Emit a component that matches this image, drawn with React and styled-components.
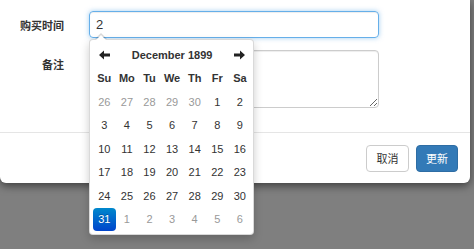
import React from "react";
import styled, { createGlobalStyle } from "styled-components";

const Global = createGlobalStyle`
  html, body { margin: 0; padding: 0; }
  body {
    background: #7f7f7f;
    font-family: "Liberation Sans", "Noto Sans CJK SC", Arial, sans-serif;
    color: #333;
    width: 474px;
    height: 249px;
    overflow: hidden;
  }
`;

const Modal = styled.div`
  width: 470px;
  background: #fff;
  border-radius: 0 0 6px 6px;
  box-shadow: 0 3px 9px rgba(0, 0, 0, 0.5);
  position: relative;
`;

const Body = styled.div`
  padding: 11px 0 24px 0;
  display: flex;
  flex-direction: column;
  gap: 12px;
`;

const Row = styled.div`
  display: grid;
  grid-template-columns: 64px 290px;
  column-gap: 25px;
  align-items: ${(p) => (p.$top ? "start" : "center")};
`;

const Label = styled.label`
  text-align: right;
  font-size: 11px;
  font-weight: 600;
  color: #333;
  font-family: "Noto Sans CJK SC", sans-serif;
  padding-top: ${(p) => (p.$top ? "6px" : "0")};
  line-height: 16px;
`;

const Field = styled.div`
  position: relative;
`;

const Input = styled.div`
  box-sizing: border-box;
  height: 27px;
  border: 1px solid #66afe9;
  border-radius: 4px;
  box-shadow: inset 0 1px 1px rgba(0, 0, 0, 0.075), 0 0 5px rgba(102, 175, 233, 0.6);
  padding: 0 6px;
  display: flex;
  align-items: center;
  font-size: 13px;
  color: #333;
`;

const Textarea = styled.textarea`
  box-sizing: border-box;
  display: block;
  width: 290px;
  height: 58px;
  border: 1px solid #ccc;
  border-radius: 4px;
  box-shadow: inset 0 1px 1px rgba(0, 0, 0, 0.075);
  margin: 0;
  padding: 4px 6px;
  font: inherit;
`;

const Footer = styled.div`
  border-top: 1px solid #e5e5e5;
  height: 50px;
  box-sizing: content-box;
  display: flex;
  justify-content: flex-end;
  align-items: center;
  gap: 7px;
  padding-right: 12px;
`;

const Button = styled.button`
  box-sizing: border-box;
  height: 27px;
  width: ${(p) => p.$w}px;
  border-radius: 4px;
  font-family: "Noto Sans CJK SC", sans-serif;
  font-size: 11px;
  padding: 0;
  border: 1px solid ${(p) => (p.$primary ? "#2e6da4" : "#ccc")};
  background: ${(p) => (p.$primary ? "#337ab7" : "#fff")};
  color: ${(p) => (p.$primary ? "#fff" : "#333")};
`;

const Picker = styled.div`
  position: absolute;
  left: 0;
  top: 28px;
  width: 165px;
  box-sizing: border-box;
  background: #fff;
  border: 1px solid rgba(0, 0, 0, 0.15);
  border-radius: 4px;
  box-shadow: 0 4px 10px rgba(0, 0, 0, 0.2);
  padding: 3px;
  z-index: 10;

  &::before {
    content: "";
    position: absolute;
    top: -7px;
    left: 5px;
    border-left: 6px solid transparent;
    border-right: 6px solid transparent;
    border-bottom: 6px solid rgba(0, 0, 0, 0.15);
  }
  &::after {
    content: "";
    position: absolute;
    top: -5px;
    left: 6px;
    border-left: 5px solid transparent;
    border-right: 5px solid transparent;
    border-bottom: 5px solid #fff;
  }
`;

const Grid = styled.div`
  display: grid;
  grid-template-columns: repeat(7, 22.6px);
  grid-auto-rows: 23.5px;
`;

const Head = styled.div`
  grid-column: ${(p) => p.$span};
  display: flex;
  align-items: center;
  justify-content: center;
  font-size: 11px;
  font-weight: bold;
  color: #333;
`;

const Dow = styled.div`
  display: flex;
  align-items: center;
  justify-content: center;
  font-size: 11px;
  font-weight: bold;
  color: #333;
`;

const Day = styled.div`
  display: flex;
  align-items: center;
  justify-content: center;
  font-size: 11px;
  border-radius: 4px;
  color: ${(p) => (p.$active ? "#fff" : p.$old ? "#999" : "#333")};
  background: ${(p) =>
    p.$active ? "linear-gradient(to bottom, #0088cc, #0044cc)" : "transparent"};
  text-shadow: ${(p) => (p.$active ? "0 -1px 0 rgba(0,0,0,0.25)" : "none")};
`;

const Arrow = ({ dir }) => (
  <svg width="11" height="10" viewBox="0 0 11 10">
    <path
      d="M0 5 L5 0.5 L5 3.5 L11 3.5 L11 6.5 L5 6.5 L5 9.5 Z"
      fill="#222"
      transform={dir === "right" ? "translate(11 0) scale(-1 1)" : undefined}
    />
  </svg>
);

const dows = ["Su", "Mo", "Tu", "We", "Th", "Fr", "Sa"];
const days = [
  [26, 1], [27, 1], [28, 1], [29, 1], [30, 1], [1], [2],
  [3], [4], [5], [6], [7], [8], [9],
  [10], [11], [12], [13], [14], [15], [16],
  [17], [18], [19], [20], [21], [22], [23],
  [24], [25], [26], [27], [28], [29], [30],
  [31, 0, 1], [1, 1], [2, 1], [3, 1], [4, 1], [5, 1], [6, 1],
];

export default function App() {
  return (
    <>
      <Global />
      <Modal>
        <Body>
          <Row>
            <Label>购买时间</Label>
            <Field>
              <Input>2</Input>
              <Picker>
                <Grid>
                  <Head $span="1"><Arrow dir="left" /></Head>
                  <Head $span="2 / span 5">December 1899</Head>
                  <Head $span="7"><Arrow dir="right" /></Head>
                  {dows.map((d) => (
                    <Dow key={d}>{d}</Dow>
                  ))}
                  {days.map(([n, old, active], i) => (
                    <Day key={i} $old={!!old} $active={!!active}>
                      {n}
                    </Day>
                  ))}
                </Grid>
              </Picker>
            </Field>
          </Row>
          <Row $top>
            <Label $top>备注</Label>
            <Textarea />
          </Row>
        </Body>
        <Footer>
          <Button $w={43}>取消</Button>
          <Button $w={42} $primary>更新</Button>
        </Footer>
      </Modal>
    </>
  );
}
